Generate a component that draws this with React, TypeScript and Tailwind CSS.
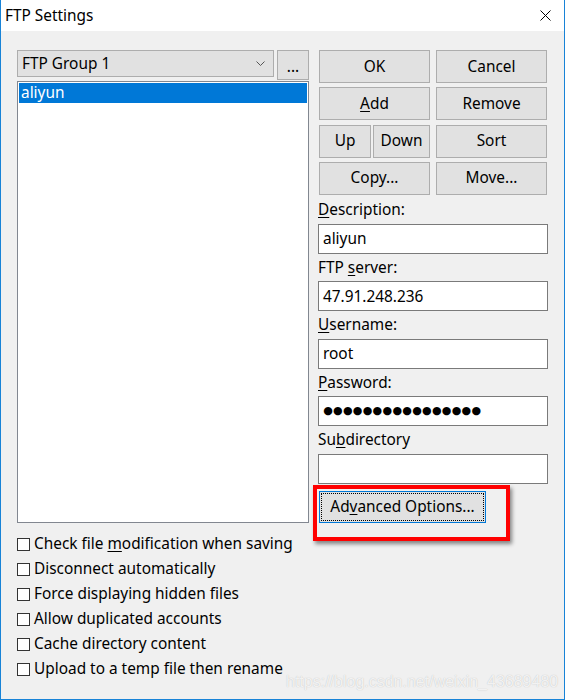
import type { ReactNode } from "react"

const font = "font-['Noto_Sans','Segoe_UI',sans-serif]"

function Btn({ children, className = "h-[33px]" }: { children: ReactNode; className?: string }) {
  return (
    <button
      type="button"
      className={`flex items-center justify-center border border-[#adadad] bg-[#e1e1e1] text-[15.4px] leading-[20px] text-black ${className}`}
    >
      {children}
    </button>
  )
}

function Field({ label, children, first = false }: { label: ReactNode; children?: ReactNode; first?: boolean }) {
  return (
    <div className="flex flex-col">
      <div className={`${first ? "pt-[5px] pb-[4px]" : "pt-[4px] pb-[3.5px]"} text-[15.4px] leading-[20px]`}>{label}</div>
      <div className="flex h-[30px] items-center border border-[#7a7a7a] bg-white px-[4px] text-[15.4px]">{children}</div>
    </div>
  )
}

const options: ReactNode[] = [
  <>Check file <u className="underline-offset-2">m</u>odification when saving</>,
  "Disconnect automatically",
  "Force displaying hidden files",
  "Allow duplicated accounts",
  "Cache directory content",
  "Upload to a temp file then rename",
]

export default function App() {
  return (
    <div className={`relative flex h-[700px] w-[565px] flex-col border-x border-b border-[#1883d7] bg-[#f0f0f0] text-black ${font}`}>
      {/* title bar */}
      <div className="flex h-[31px] items-center justify-between bg-white pl-[4px] pr-[13px]">
        <span className="text-[15.4px]">FTP Settings</span>
        <svg width="11" height="11" viewBox="0 0 11 11" className="mb-[1px]">
          <path d="M0.5 0.5 L10.5 10.5 M10.5 0.5 L0.5 10.5" stroke="#000" strokeWidth="1" />
        </svg>
      </div>

      <div className="flex flex-col pl-[16px] pt-[19px]">
        <div className="flex gap-[9px]">
          {/* left: group + list */}
          <div className="flex w-[292px] flex-col">
            <div className="flex items-start gap-[3px]">
              <div className="flex h-[27px] w-[257px] items-center justify-between border border-[#adadad] bg-[#e1e1e1] pl-[4px] pr-[8px] text-[15.4px]">
                <span>FTP Group 1</span>
                <svg width="9" height="5" viewBox="0 0 9 5">
                  <path d="M0.5 0.5 L4.5 4.5 L8.5 0.5" fill="none" stroke="#555" strokeWidth="1" />
                </svg>
              </div>
              <Btn className="h-[30px] w-[32px] pt-[4px]">...</Btn>
            </div>
            <div className="mt-[1px] h-[442px] border border-[#828790] bg-white p-[1px]">
              <div className="flex h-[20px] items-center bg-[#0078d7] pl-[2px] text-[15.4px] text-white">aliyun</div>
            </div>
          </div>

          {/* right: buttons + fields */}
          <div className="flex w-[230px] flex-col">
            <div className="grid grid-cols-2 gap-x-[6px] gap-y-[4.33px] px-[1px]">
              <Btn>OK</Btn>
              <Btn>Cancel</Btn>
              <Btn>
                <u className="underline-offset-2">A</u>dd
              </Btn>
              <Btn>Remove</Btn>
              <div className="flex gap-[2px]">
                <Btn className="h-[33px] w-[52px]">Up</Btn>
                <Btn className="h-[33px] flex-1">Down</Btn>
              </div>
              <Btn>Sort</Btn>
              <Btn>Copy...</Btn>
              <Btn>Move...</Btn>
            </div>

            <Field first label={<><u className="underline-offset-2">D</u>escription:</>}>aliyun</Field>
            <Field label={<>FTP <u className="underline-offset-2">s</u>erver:</>}>47.91.248.236</Field>
            <Field label={<><u className="underline-offset-2">U</u>sername:</>}>root</Field>
            <Field label={<><u className="underline-offset-2">P</u>assword:</>}>
              <span className="flex">
                {Array.from({ length: 16 }).map((_, i) => (
                  <span key={i} className="w-[9.9px] text-center font-['DejaVu_Sans',sans-serif] text-[11px] leading-[14px]">
                    ●
                  </span>
                ))}
              </span>
            </Field>
            <Field label={<>Su<u className="underline-offset-2">b</u>directory</>} />

            <div className="mt-[7px] pl-[1px]">
              <button
                type="button"
                className="flex h-[32px] w-[167px] items-center justify-center border border-[#0078d7] bg-[#e1e1e1] p-[1px] text-[15.4px]"
              >
                <span className="flex h-full w-full items-center justify-center border border-dotted border-black">
                  Ad<u className="underline-offset-2">v</u>anced Options...
                </span>
              </button>
            </div>
          </div>
        </div>

        {/* checkboxes */}
        <div className="mt-[11px] flex flex-col gap-[5px]">
          {options.map((o, i) => (
            <label key={i} className="flex h-[20px] items-center gap-[4px] text-[15.4px] leading-[20px]">
              <span className="h-[13px] w-[13px] border border-[#333] bg-white" />
              <span>{o}</span>
            </label>
          ))}
        </div>
      </div>

      {/* highlight drawn over the screenshot */}
      <div className="absolute left-[312px] top-[485px] h-[56px] w-[197px] border-[4px] border-[#ff0000] shadow-[2px_3px_4px_rgba(0,0,0,0.45)]" />

      {/* watermark */}
      <div className="absolute left-[285px] top-[670px] font-['Liberation_Sans',sans-serif] text-[16px] text-white/80 [text-shadow:0_0_1px_rgba(0,0,0,0.25)]">
        https://blog.csdn.net/weixin_43689480
      </div>
    </div>
  )
}
